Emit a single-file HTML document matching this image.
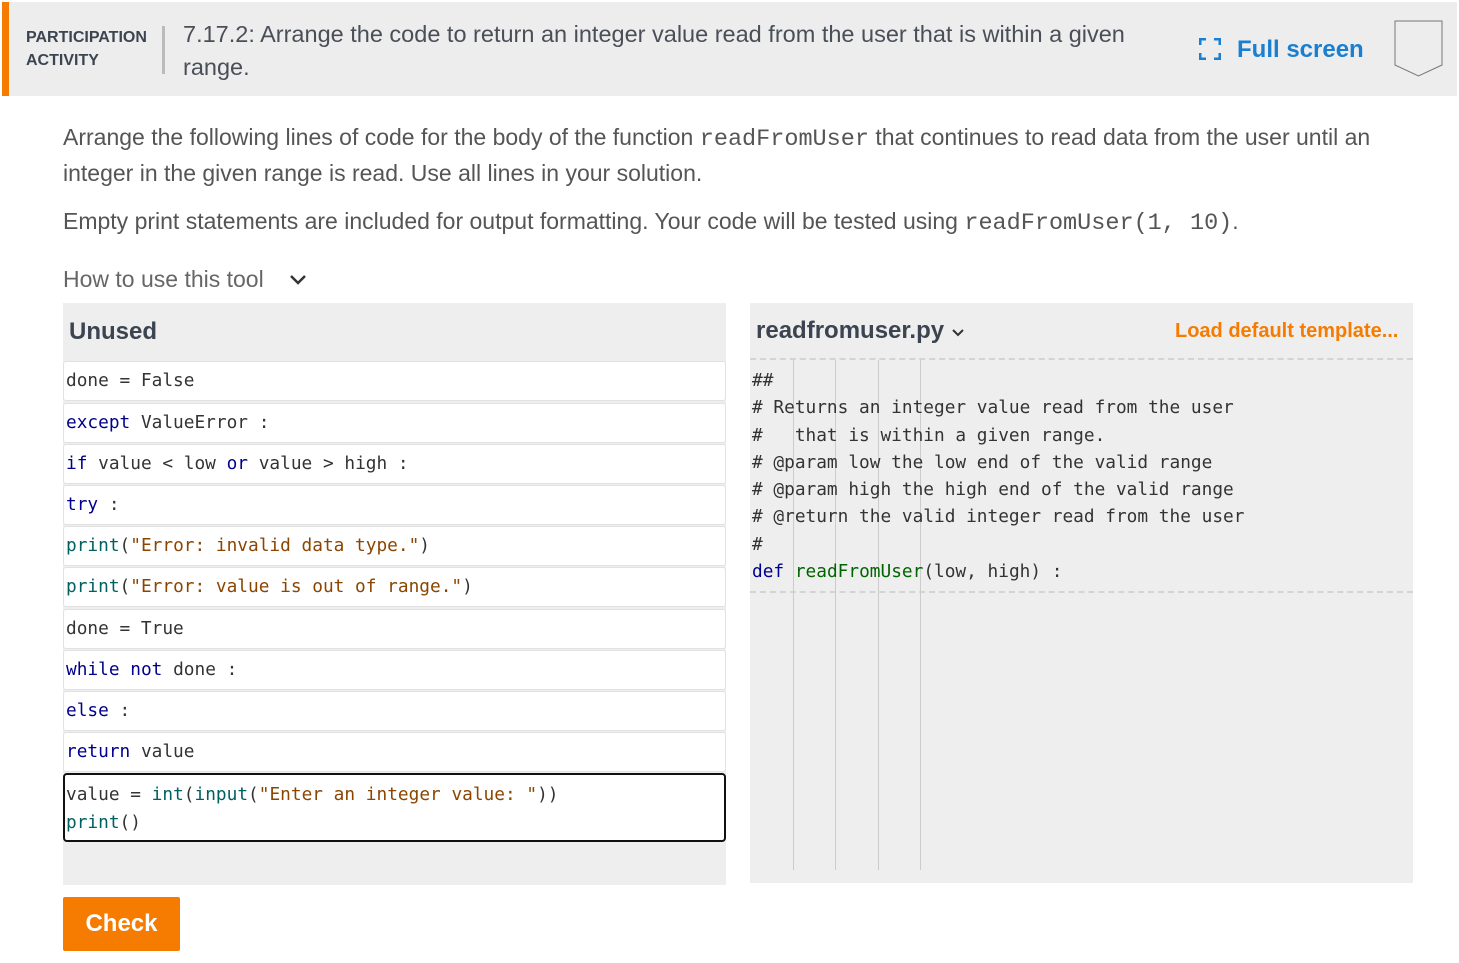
<!DOCTYPE html>
<html><head><meta charset="utf-8"><style>
*{box-sizing:border-box;margin:0;padding:0}
body{width:1459px;height:963px;background:#fff;font-family:"Liberation Sans",sans-serif;position:relative;overflow:hidden;color:#333}
.hdr{position:absolute;left:2px;top:2px;width:1455px;height:94px;background:#ededed;border-left:7px solid #f57c00}
.pa{position:absolute;left:17px;top:24px;font-weight:bold;font-size:16px;line-height:23px;color:#3b4450}
.sep{position:absolute;left:153px;top:24px;width:3px;height:48px;background:#bbb}
.title{position:absolute;left:174px;top:16px;font-size:23.5px;line-height:33px;color:#4a4f57;width:960px}
.fs{position:absolute;left:1190px;top:34px;color:#1a7fd0;font-weight:bold;font-size:24px}
.bm{position:absolute;left:1394px;top:20px}
.p{position:absolute;left:63px;font-size:23px;color:#555;line-height:36px;width:1360px}
.m{font-family:"Liberation Mono",monospace;font-size:23.5px;line-height:1}
.panel{position:absolute;background:#eeeeee}
.code{font-family:"DejaVu Sans Mono","Liberation Mono",monospace;font-size:17.8px;white-space:pre}
.blk{position:absolute;left:63px;width:663px;background:#fff;border:1px solid #e2e2e2;border-radius:3px;padding-left:2px;line-height:38px;color:#333}
.k{color:#00008b}.s{color:#8b4500}.f{color:#006060}.g{color:#006400}
.cl{position:absolute;left:752px;line-height:27.3px;color:#333}
</style></head><body>
<div class="hdr">
<div class="pa">PARTICIPATION<br>ACTIVITY</div>
<div class="sep"></div>
<div class="title">7.17.2: Arrange the code to return an integer value read from the user that is within a given range.</div>
<div class="fs"><svg width="22" height="22" viewBox="0 0 22 22" style="vertical-align:-3px;margin-right:16px" fill="none" stroke="#1a7fd0" stroke-width="3"><path d="M1 7V1h6M15 1h6v6M21 15v6h-6M7 21H1v-6"/></svg>Full screen</div>
</div>
<svg class="bm" width="50" height="58" viewBox="0 0 50 58"><path d="M1 1H48V45L24.5 56L1 45Z" fill="#ededed" stroke="#777" stroke-width="1"/></svg>
<div class="p" style="top:119px">Arrange the following lines of code for the body of the function <span class="m">readFromUser</span> that continues to read data from the user until an integer in the given range is read. Use all lines in your solution.</div>
<div class="p" style="top:203px">Empty print statements are included for output formatting. Your code will be tested using <span class="m">readFromUser(1, 10)</span>.</div>
<div class="p" style="top:261px;color:#666">How to use this tool <svg width="20" height="14" viewBox="0 0 20 14" style="margin-left:18px"><path d="M3 3l7 7 7-7" fill="none" stroke="#333" stroke-width="2.5"/></svg></div>
<div class="panel" style="left:63px;top:303px;width:663px;height:582px"></div>
<div style="position:absolute;left:69px;top:318px;font-size:24px;font-weight:bold;color:#3b4450">Unused</div>
<div class="blk code" style="top:361px">done = False</div>
<div class="blk code" style="top:403px"><span class="k">except</span> ValueError :</div>
<div class="blk code" style="top:444px"><span class="k">if</span> value &lt; low <span class="k">or</span> value &gt; high :</div>
<div class="blk code" style="top:485px"><span class="k">try</span> :</div>
<div class="blk code" style="top:526px"><span class="f">print</span>(<span class="s">"Error: invalid data type."</span>)</div>
<div class="blk code" style="top:567px"><span class="f">print</span>(<span class="s">"Error: value is out of range."</span>)</div>
<div class="blk code" style="top:609px">done = True</div>
<div class="blk code" style="top:650px"><span class="k">while</span> <span class="k">not</span> done :</div>
<div class="blk code" style="top:691px"><span class="k">else</span> :</div>
<div class="blk code" style="top:732px"><span class="k">return</span> value</div>
<div class="blk code" style="top:773px;height:69px;border:2px solid #111;border-radius:4px;line-height:28px;padding-top:6px;padding-left:1px">value = <span class="f">int</span>(<span class="f">input</span>(<span class="s">"Enter an integer value: "</span>))
<span class="f">print</span>()</div>
<div style="position:absolute;left:63px;top:897px;width:117px;height:54px;background:#f57c00;border-radius:2px;color:#fff;font-weight:bold;font-size:24px;text-align:center;line-height:54px">Check</div>
<div class="panel" style="left:750px;top:303px;width:663px;height:580px"></div>
<div style="position:absolute;left:756px;top:317px;font-size:24px;font-weight:bold;color:#3b4450">readfromuser.py <svg width="14" height="10" viewBox="0 0 14 10"><path d="M2 2l5 5 5-5" fill="none" stroke="#333" stroke-width="2"/></svg></div>
<div style="position:absolute;left:1175px;top:320px;font-size:20px;font-weight:bold;color:#f57c00">Load default template...</div>
<div style="position:absolute;left:750px;top:358px;width:663px;border-top:2px dashed #d4d4d4"></div>
<div style="position:absolute;left:750px;top:591px;width:663px;border-top:2px dashed #d4d4d4"></div>
<div style="position:absolute;left:793px;top:360px;width:1px;height:510px;background:#ccc"></div>
<div style="position:absolute;left:835px;top:360px;width:1px;height:510px;background:#ccc"></div>
<div style="position:absolute;left:878px;top:360px;width:1px;height:510px;background:#ccc"></div>
<div style="position:absolute;left:920px;top:360px;width:1px;height:510px;background:#ccc"></div>
<div class="cl code" style="top:367px">##
# Returns an integer value read from the user
#   that is within a given range.
# @param low the low end of the valid range
# @param high the high end of the valid range
# @return the valid integer read from the user
#
<span class="k">def</span> <span class="g">readFromUser</span>(low, high) :</div>
</body></html>
